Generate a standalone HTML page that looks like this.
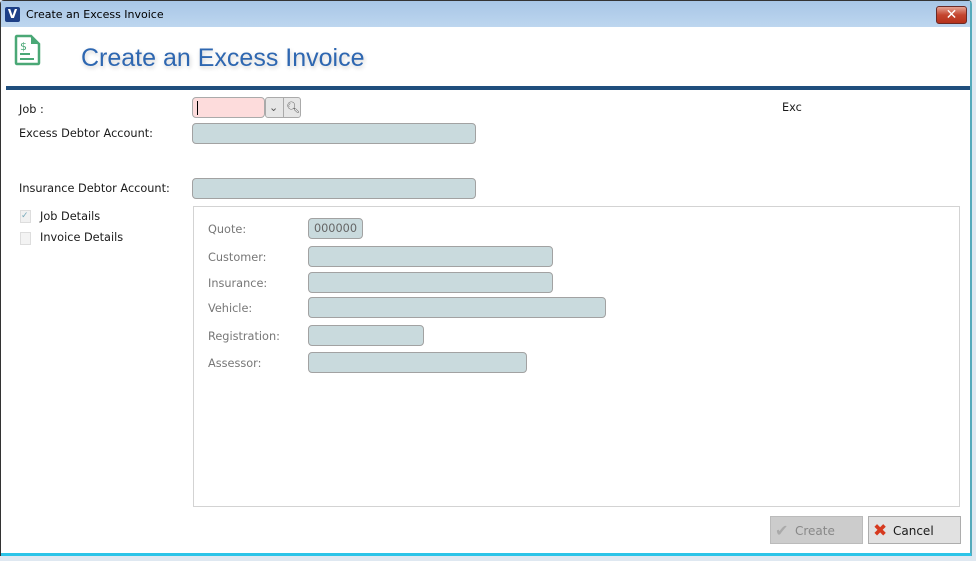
<!DOCTYPE html>
<html><head><meta charset="utf-8"><style>
*{margin:0;padding:0;box-sizing:border-box}
body{width:976px;height:561px;background:#dfe8f1;position:relative;overflow:hidden;font-family:"DejaVu Sans","Liberation Sans",sans-serif;font-size:11.3px;color:#1a1a1a}
.win{position:absolute;left:0;top:0;width:972px;height:556px;background:#fff;border-radius:4px 4px 0 0;box-shadow:inset 1px 1px 0 #333,inset -2px 0 0 #5ab}
.bot{position:absolute;left:1px;top:553px;width:970px;height:3px;background:#2bc4e8}
.tb{position:absolute;left:1px;top:1px;right:2px;height:26px;background:linear-gradient(#a8c6e6,#bdd6ef)}
.tb .t{position:absolute;left:25px;top:7px;font-size:11px;color:#000}
.logo{position:absolute;left:4px;top:6px;width:15px;height:15px;background:#1d3f86;border-radius:2px;color:#fff;font-weight:bold;font-size:12px;text-align:center;line-height:15px}
.close{position:absolute;left:935px;top:5px;width:31px;height:18px;border:1px solid #6b2a26;border-radius:3px;background:linear-gradient(#e5a394,#c4452f 50%,#b5321c);color:#fff;font-weight:bold;text-align:center;line-height:16px;font-size:14px}
.h1{position:absolute;left:81px;top:44px;font-size:25px;color:#2e67b1;font-family:"Liberation Sans",sans-serif;text-shadow:1px 2px 4px rgba(0,0,0,.2)}
.bar{position:absolute;left:6px;top:86px;width:964px;height:4px;background:#1f4e7d}
.l{position:absolute}
.g{color:#777}
.f{position:absolute;background:#c9dadd;border:1px solid #a2a2a2;border-radius:4px;height:21px}
.panel{position:absolute;left:193px;top:206px;width:767px;height:301px;border:1px solid #d3d3d3}
.btn{position:absolute;top:516px;height:28px;border:1px solid #adadad;background:#e1e1e1;font-size:12px;line-height:28px}
</style></head><body>
<div class="win">
<div class="tb"><div class="logo">V</div><div class="t">Create an Excess Invoice</div><div class="close">✕</div></div>
<svg style="position:absolute;left:14px;top:34px" width="28" height="32" viewBox="0 0 28 32"><path d="M3 2h14l8 8v19a1 1 0 0 1-1 1H3a1 1 0 0 1-1-1V3a1 1 0 0 1 1-1z" fill="none" stroke="#4aa876" stroke-width="2.5"/><path d="M17 2v8h8" fill="#4aa876"/><text x="6" y="16" font-size="11" fill="#4aa876" font-family="DejaVu Sans">$</text><rect x="6" y="19" width="10" height="2" fill="#4aa876"/><rect x="6" y="24" width="14" height="2" fill="#4aa876"/></svg>
<div class="h1">Create an Excess Invoice</div>
<div class="bar"></div>
<div class="l" style="left:19px;top:103px">Job :</div>
<div style="position:absolute;left:192px;top:97px;width:73px;height:21px;background:#fddcdc;border:1px solid #aaa;border-radius:4px"><div style="position:absolute;left:4px;top:3px;width:1px;height:14px;background:#000"></div></div>
<div style="position:absolute;left:265px;top:97px;width:36px;height:21px;border:1px solid #aaa;border-radius:3px;background:#e6e6e6;font-size:11px;color:#555;line-height:19px"><span style="position:absolute;left:3px">⌄</span><span style="position:absolute;left:17px;top:0;border-left:1px solid #aaa;padding-left:2px">🔍︎</span></div>
<div class="l" style="left:782px;top:101px">Exc</div>
<div class="l" style="left:19px;top:127px">Excess Debtor Account:</div>
<div class="f" style="left:192px;top:123px;width:284px"></div>
<div class="l" style="left:19px;top:182px">Insurance Debtor Account:</div>
<div class="f" style="left:192px;top:178px;width:284px"></div>
<div style="position:absolute;left:20px;top:210px;width:11px;height:13px;background:#f1f1f1;border:1px solid #ddd;color:#7ab;font-size:9px;line-height:11px">✓</div>
<div class="l" style="left:40px;top:210px">Job Details</div>
<div style="position:absolute;left:20px;top:232px;width:11px;height:13px;background:#f3f3f3;border:1px solid #ddd"></div>
<div class="l" style="left:40px;top:231px">Invoice Details</div>
<div class="panel"></div>
<div class="l g" style="left:208px;top:223px">Quote:</div>
<div class="f" style="left:308px;top:218px;width:55px;color:#666;text-align:center;line-height:20px">000000</div>
<div class="l g" style="left:208px;top:251px">Customer:</div>
<div class="f" style="left:308px;top:246px;width:245px"></div>
<div class="l g" style="left:208px;top:277px">Insurance:</div>
<div class="f" style="left:308px;top:272px;width:245px"></div>
<div class="l g" style="left:208px;top:302px">Vehicle:</div>
<div class="f" style="left:308px;top:297px;width:298px"></div>
<div class="l g" style="left:208px;top:330px">Registration:</div>
<div class="f" style="left:308px;top:325px;width:116px"></div>
<div class="l g" style="left:208px;top:357px">Assessor:</div>
<div class="f" style="left:308px;top:352px;width:219px"></div>
<div class="btn" style="left:770px;width:93px;background:#cccccc;color:#888;border-color:#bbb"><span style="position:absolute;left:4px;color:#aaa;font-size:16px">✔</span><span style="position:absolute;left:24px">Create</span></div>
<div class="btn" style="left:868px;width:93px"><span style="position:absolute;left:4px;color:#d63a1f;font-size:17px;font-weight:bold">✖</span><span style="position:absolute;left:24px">Cancel</span></div>
</div>
<div class="bot"></div>
</body></html>
